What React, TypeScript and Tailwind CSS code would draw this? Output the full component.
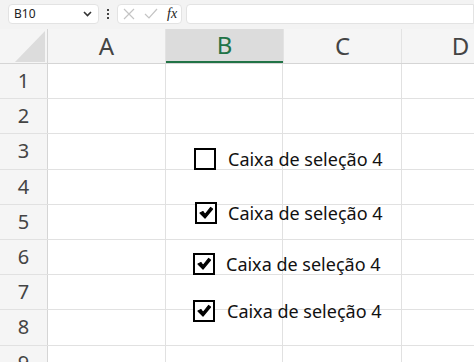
import React from 'react'

const rows = [1, 2, 3, 4, 5, 6, 7, 8, 9]

const checks = [
  { top: 148, left: 194, textLeft: 228, checked: false },
  { top: 202, left: 195, textLeft: 228, checked: true },
  { top: 253, left: 193, textLeft: 226, checked: true },
  { top: 300, left: 193, textLeft: 227, checked: true },
]

function Box({ checked }: { checked: boolean }) {
  return (
    <div className="w-[22px] h-[22px] border-2 border-black bg-white flex items-center justify-center">
      {checked && (
        <svg width="16" height="16" viewBox="0 0 16 16">
          <path
            d="M2 8 L5 6.5 L7 9.5 L12.5 2.5 L14.5 4 L7 13 Z"
            fill="black"
            stroke="black"
            strokeWidth="1.2"
            strokeLinejoin="round"
          />
        </svg>
      )}
    </div>
  )
}

export default function App() {
  return (
    <div className="relative w-[474px] h-[362px] overflow-hidden bg-white" style={{ fontFamily: '"Noto Sans", "Open Sans", sans-serif' }}>
      {/* formula bar */}
      <div className="h-[29px] bg-[#f3f3f3] flex items-start pt-[4px] pl-[8px] gap-0">
        <div className="w-[91px] h-[20px] bg-white rounded-[4px] border border-[#e3e3e3] flex items-center justify-between pl-[5px] pr-[6px]">
          <span className="text-[12px] text-[#222]">B10</span>
          <svg width="9" height="6" viewBox="0 0 9 6">
            <path d="M1 1 L4.5 4.5 L8 1" fill="none" stroke="#333" strokeWidth="1.6" />
          </svg>
        </div>
        <div className="w-[18px] h-[20px] flex flex-col items-center justify-center gap-[2px]">
          <div className="w-[2px] h-[2px] bg-[#444]" />
          <div className="w-[2px] h-[2px] bg-[#444]" />
          <div className="w-[2px] h-[2px] bg-[#444]" />
        </div>
        <div className="w-[65px] h-[20px] bg-white rounded-[4px] border border-[#e3e3e3] flex items-center pl-[5px] gap-[9px]">
          <svg width="12" height="12" viewBox="0 0 12 12">
            <path d="M1 1 L11 11 M11 1 L1 11" stroke="#c4c4c4" strokeWidth="1.2" />
          </svg>
          <svg width="14" height="12" viewBox="0 0 14 12">
            <path d="M1 6 L5 10 L13 1" fill="none" stroke="#c4c4c4" strokeWidth="1.2" />
          </svg>
          <span className="text-[14px] italic text-[#222] leading-none" style={{ fontFamily: '"Liberation Serif", serif' }}>fx</span>
        </div>
        <div className="ml-[4px] flex-1 h-[20px] bg-white rounded-l-[4px] border border-[#e3e3e3]" />
      </div>

      {/* column headers */}
      <div className="flex h-[35px] bg-[#f5f5f5] border-b border-[#d5d5d5] text-[#444]">
        <div className="relative w-[48px] shrink-0 border-r border-[#d5d5d5]">
          <svg className="absolute right-[2px] bottom-[1px]" width="30" height="31" viewBox="0 0 30 31">
            <path d="M30 0 L30 31 L0 31 Z" fill="#dcdcdc" />
          </svg>
        </div>
        <div className="w-[118px] shrink-0 border-r border-[#e3e3e3] flex items-center justify-center text-[24px]">A</div>
        <div className="w-[117px] shrink-0 bg-[#dcdcdc] border-b-2 border-[#217346] flex items-center justify-center text-[24px] text-[#217346]">B</div>
        <div className="w-[119px] shrink-0 border-x border-[#e3e3e3] flex items-center justify-center text-[24px]">C</div>
        <div className="w-[117px] shrink-0 flex items-center justify-center text-[24px]">D</div>
      </div>

      {/* grid */}
      {rows.map((r) => (
        <div key={r} className="flex h-[35.2px] border-b border-[#e1e1e1]">
          <div className="w-[48px] shrink-0 bg-[#f5f5f5] border-r border-[#d5d5d5] flex items-center justify-center text-[20px] text-[#444]">{r}</div>
          <div className="w-[118px] shrink-0 border-r border-[#e1e1e1]" />
          <div className="w-[117px] shrink-0 border-r border-[#e1e1e1]" />
          <div className="w-[119px] shrink-0 border-r border-[#e1e1e1]" />
          <div className="flex-1" />
        </div>
      ))}

      {/* form controls */}
      {checks.map((c, i) => (
        <div key={i} className="absolute flex items-center" style={{ top: c.top, left: c.left }}>
          <Box checked={c.checked} />
          <span className="absolute whitespace-nowrap text-[18px] text-[#111] leading-none" style={{ left: c.textLeft - c.left }}>
            Caixa de seleção 4
          </span>
        </div>
      ))}
    </div>
  )
}
